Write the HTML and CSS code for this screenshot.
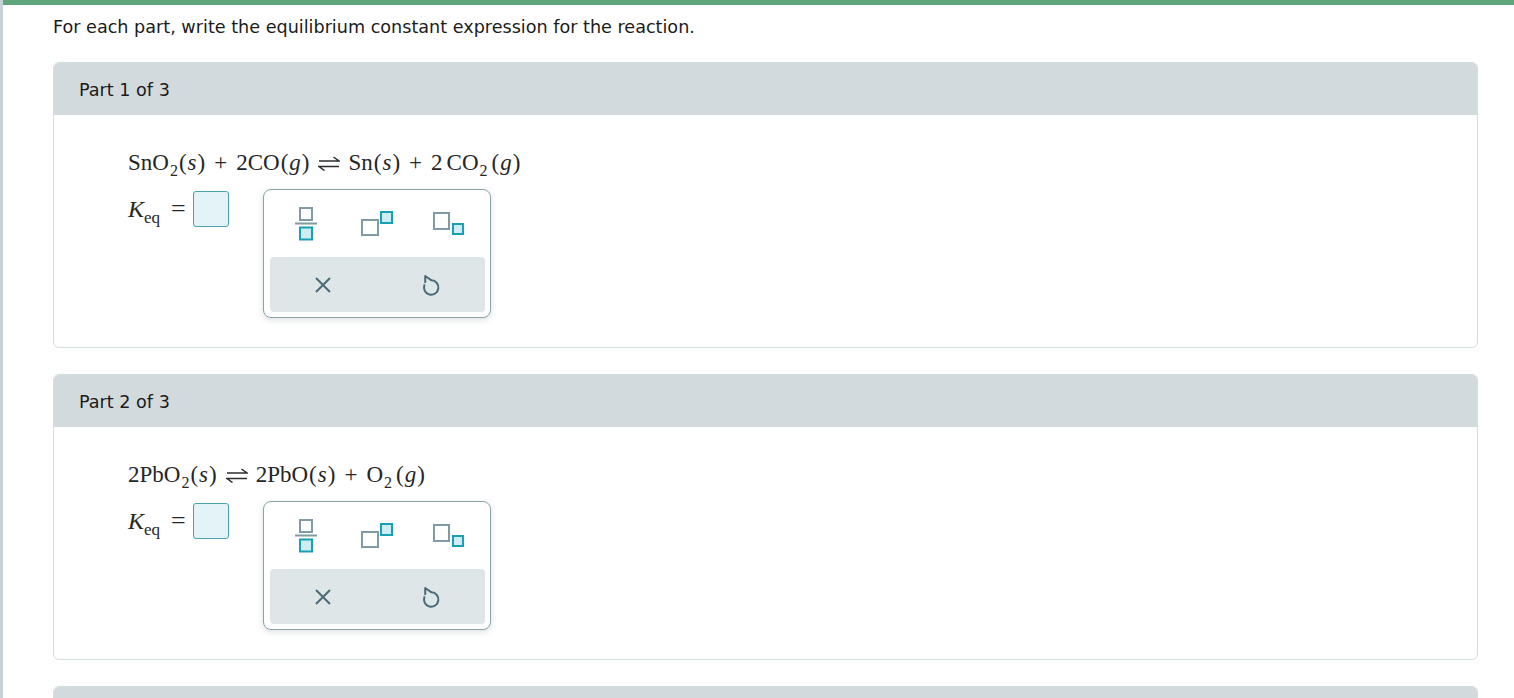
FILE: index.html
```html
<!DOCTYPE html>
<html>
<head>
<meta charset="utf-8">
<link rel="stylesheet" href="styles.css">
</head>
<body>
<div class="topbar"></div>
<main class="page">
  <p class="instr">For each part, write the equilibrium constant expression for the reaction.</p>

  <section class="card">
    <div class="card-head">Part 1 of 3</div>
    <div class="card-body">
      <div class="eq">
        <span>SnO</span><sub>2</sub><span class="p">(<i>s</i>)</span><span class="op">+</span><span>2CO</span><span class="p">(<i>g</i>)</span><span class="arr"><svg width="22" height="15" viewBox="0 0 22 15"><path d="M1 5H21L15.5 1M21 10.5H1L6.5 14.5" fill="none" stroke="#2e2e2e" stroke-width="1.5"/></svg></span><span>Sn</span><span class="p">(<i>s</i>)</span><span class="op">+</span><span>2</span><span class="th">CO</span><sub>2</sub><span class="p th">(<i>g</i>)</span>
      </div>
      <div class="answer">
        <div class="keq"><i class="k">K</i><sub class="eqsub">eq</sub><span class="eqs">=</span><span class="box"></span></div>
        <div class="palette">
          <div class="tools">
            <div class="tool"><svg width="24" height="36" viewBox="0 0 24 36"><rect x="6" y="2" width="12" height="12" fill="#fff" stroke="#809ba3" stroke-width="2"/><path d="M1 17.5H23" stroke="#809ba3" stroke-width="2"/><rect x="6" y="21.5" width="12" height="12" fill="#cdedf3" stroke="#17a0b6" stroke-width="2"/></svg></div>
            <div class="tool"><svg width="36" height="30" viewBox="0 0 36 30"><rect x="3" y="11" width="16" height="15" fill="#fff" stroke="#809ba3" stroke-width="2"/><rect x="22" y="3" width="11" height="11" fill="#cdedf3" stroke="#17a0b6" stroke-width="2"/></svg></div>
            <div class="tool"><svg width="36" height="28" viewBox="0 0 36 28"><rect x="3" y="3" width="15" height="16" fill="#fff" stroke="#809ba3" stroke-width="2"/><rect x="22" y="14" width="10" height="10" fill="#cdedf3" stroke="#17a0b6" stroke-width="2"/></svg></div>
          </div>
          <div class="actions">
            <div class="act"><svg width="18" height="18" viewBox="0 0 18 18"><path d="M2 2L16 16M16 2L2 16" stroke="#4a6b78" stroke-width="2" fill="none"/></svg></div>
            <div class="act"><svg width="20" height="25" viewBox="0 0 20 25"><path d="M3.4 13.1A7.2 7.2 0 1 0 10.5 8.3L4.2 4V10.2" fill="none" stroke="#4a6b78" stroke-width="2" stroke-linejoin="round" stroke-linecap="round"/></svg></div>
          </div>
        </div>
      </div>
    </div>
  </section>

  <section class="card">
    <div class="card-head">Part 2 of 3</div>
    <div class="card-body">
      <div class="eq">
        <span>2PbO</span><sub>2</sub><span class="p">(<i>s</i>)</span><span class="arr"><svg width="22" height="15" viewBox="0 0 22 15"><path d="M1 5H21L15.5 1M21 10.5H1L6.5 14.5" fill="none" stroke="#2e2e2e" stroke-width="1.5"/></svg></span><span>2PbO</span><span class="p">(<i>s</i>)</span><span class="op">+</span><span>O</span><sub>2</sub><span class="p th">(<i>g</i>)</span>
      </div>
      <div class="answer">
        <div class="keq"><i class="k">K</i><sub class="eqsub">eq</sub><span class="eqs">=</span><span class="box"></span></div>
        <div class="palette">
          <div class="tools">
            <div class="tool"><svg width="24" height="36" viewBox="0 0 24 36"><rect x="6" y="2" width="12" height="12" fill="#fff" stroke="#809ba3" stroke-width="2"/><path d="M1 17.5H23" stroke="#809ba3" stroke-width="2"/><rect x="6" y="21.5" width="12" height="12" fill="#cdedf3" stroke="#17a0b6" stroke-width="2"/></svg></div>
            <div class="tool"><svg width="36" height="30" viewBox="0 0 36 30"><rect x="3" y="11" width="16" height="15" fill="#fff" stroke="#809ba3" stroke-width="2"/><rect x="22" y="3" width="11" height="11" fill="#cdedf3" stroke="#17a0b6" stroke-width="2"/></svg></div>
            <div class="tool"><svg width="36" height="28" viewBox="0 0 36 28"><rect x="3" y="3" width="15" height="16" fill="#fff" stroke="#809ba3" stroke-width="2"/><rect x="22" y="14" width="10" height="10" fill="#cdedf3" stroke="#17a0b6" stroke-width="2"/></svg></div>
          </div>
          <div class="actions">
            <div class="act"><svg width="18" height="18" viewBox="0 0 18 18"><path d="M2 2L16 16M16 2L2 16" stroke="#4a6b78" stroke-width="2" fill="none"/></svg></div>
            <div class="act"><svg width="20" height="25" viewBox="0 0 20 25"><path d="M3.4 13.1A7.2 7.2 0 1 0 10.5 8.3L4.2 4V10.2" fill="none" stroke="#4a6b78" stroke-width="2" stroke-linejoin="round" stroke-linecap="round"/></svg></div>
          </div>
        </div>
      </div>
    </div>
  </section>

  <section class="card">
    <div class="card-head"></div>
  </section>
</main>
</body>
</html>
```

FILE: styles.css
```css
* { box-sizing: border-box; }
html, body { margin: 0; padding: 0; background: #fff; }
body {
  border-left: 3px solid #c6d3d9;
  min-height: 100vh;
  font-family: "DejaVu Sans", Verdana, sans-serif;
  color: #1b1b1b;
  overflow: hidden;
}
.topbar { height: 5px; background: #5ea57b; }
.page { padding: 0 36px 0 50px; }
.instr {
  margin: 12px 0 25px;
  font-size: 17.6px;
  line-height: 20px;
}
.card {
  border: 1px solid #d3dde0;
  border-radius: 6px;
  margin-bottom: 26px;
  overflow: hidden;
}
.card-head {
  height: 52px;
  background: #d2dadd;
  display: flex;
  align-items: center;
  padding: 2px 0 0 25px;
  font-size: 17.6px;
}
.card-body { padding: 33px 0 29px 74px; }
.eq {
  font-family: "Liberation Serif", "Times New Roman", serif;
  font-size: 23px;
  line-height: 30px;
  height: 30px;
  color: #262626;
  display: flex;
  align-items: baseline;
  white-space: nowrap;
}
.eq sub {
  font-size: 16px;
  position: relative;
  top: 6px;
  vertical-align: baseline;
  margin-left: 1px;
}
.eq i { font-style: italic; padding: 0 1px; }
.eq .p { margin-left: 1px; }
.eq .op { margin: 0 9px; }
.eq .th { margin-left: 4px; }
.eq .arr { margin: 0 8px 0 9px; align-self: center; display: flex; }
.answer { display: flex; align-items: flex-start; margin-top: 11px; }
.keq {
  display: flex;
  align-items: center;
  margin-top: 2px;
  font-family: "Liberation Serif", "Times New Roman", serif;
  color: #262626;
}
.k { font-size: 24px; }
.eqsub { font-size: 17px; position: relative; top: 9px; margin-left: 0; }
.eqs { font-size: 26px; margin: 0 7px 0 11px; }
.box {
  width: 36px;
  height: 36px;
  border: 1.5px solid #4aa3b4;
  background: #e4f3f7;
  border-radius: 3px;
}
.palette {
  margin-left: 34px;
  width: 228px;
  height: 129px;
  border: 1px solid #8aa3ab;
  border-radius: 8px;
  box-shadow: 0 2px 6px rgba(60, 80, 90, 0.18);
  background: #fff;
  display: flex;
  flex-direction: column;
  padding: 0 5px 5px 6px;
}
.tools { height: 67px; display: flex; }
.tool { flex: 1; display: flex; align-items: center; justify-content: center; }
.actions {
  flex: 1;
  background: #dfe6e8;
  border-radius: 4px;
  display: flex;
}
.act { flex: 1; display: flex; align-items: center; justify-content: center; }
```
